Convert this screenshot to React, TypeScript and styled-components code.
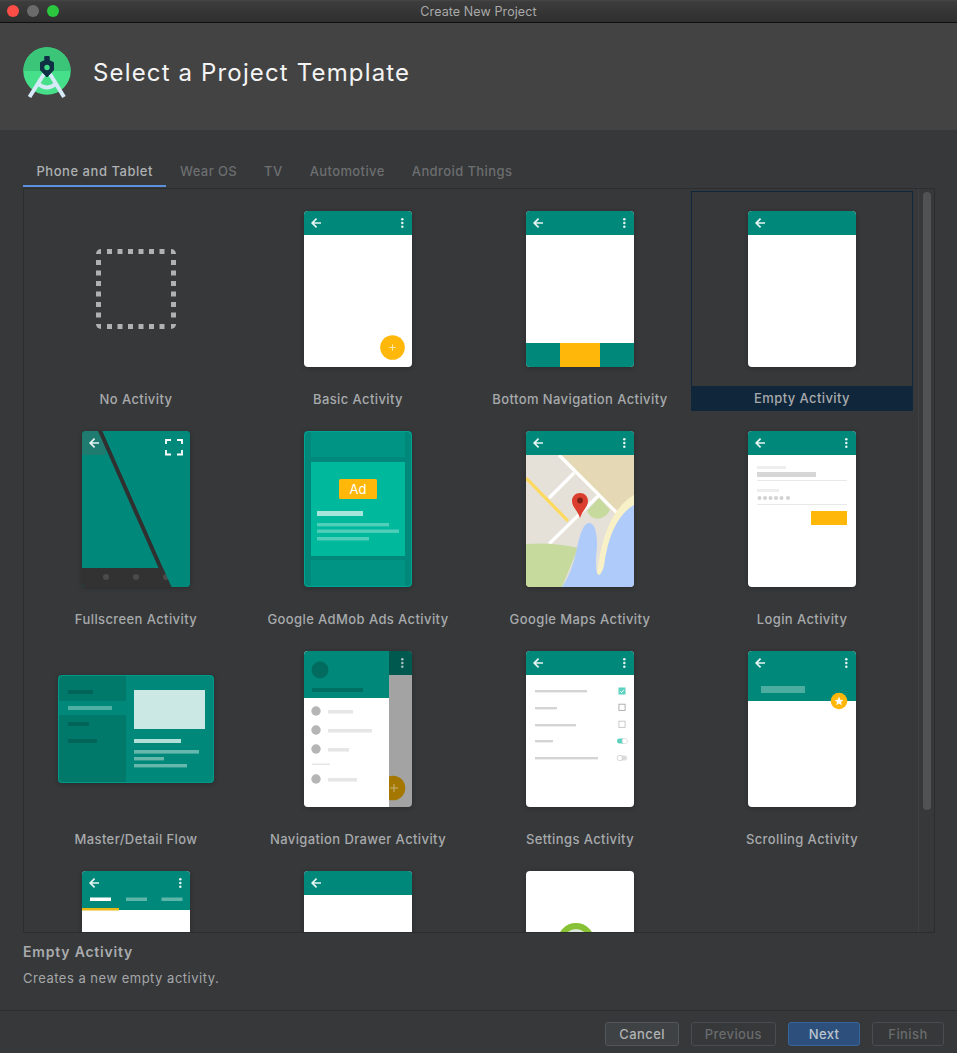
import type { ReactNode } from "react";
import styled, { createGlobalStyle } from "styled-components";

const TEAL = "#00897b";
const AMBER = "#ffb80a";

const GlobalStyle = createGlobalStyle`
  html, body {
    margin: 0;
    padding: 0;
    background: #36383a;
  }

  body {
    font-family: Inter, "Liberation Sans", sans-serif;
    -webkit-font-smoothing: antialiased;
  }
`;

function Arrow() {
  return (
    <path
      d="M17 12 H9 M12.6 7.6 L8.2 12 L12.6 16.4"
      fill="none"
      stroke="#e6f4f2"
      strokeWidth="1.7"
    />
  );
}

function Dots({ color = "#e6f4f2" }: { color?: string }) {
  return (
    <g fill={color}>
      <circle cx="98.3" cy="8.2" r="1.25" />
      <circle cx="98.3" cy="12" r="1.25" />
      <circle cx="98.3" cy="15.8" r="1.25" />
    </g>
  );
}

function Toolbar({ dots = true, height = 24 }: { dots?: boolean; height?: number }) {
  return (
    <>
      <rect width="108" height={height} fill={TEAL} />
      <Arrow />
      {dots && <Dots />}
    </>
  );
}

function Phone({ children, bg = "#fff" }: { children: ReactNode; bg?: string }) {
  return (
    <PhoneSvg viewBox="0 0 108 156" $bg={bg}>
      {children}
    </PhoneSvg>
  );
}

function NoActivity() {
  const steps = [11, 21.5, 32, 42.5, 53, 63.5];
  return (
    <BlankSvg viewBox="0 0 80 80">
      <g fill="#afb1b2">
        {steps.map((s) => (
          <g key={s}>
            <rect x={s} y="0" width="5" height="5" />
            <rect x={s} y="75" width="5" height="5" />
            <rect x="0" y={s} width="5" height="5" />
            <rect x="75" y={s} width="5" height="5" />
          </g>
        ))}
        <path d="M0 5 A5 5 0 0 1 5 0 V5 Z" />
        <path d="M75 0 A5 5 0 0 1 80 5 H75 Z" />
        <path d="M0 75 H5 V80 A5 5 0 0 1 0 75 Z" />
        <path d="M75 75 H80 A5 5 0 0 1 75 80 Z" />
      </g>
    </BlankSvg>
  );
}

function BasicPreview() {
  return (
    <Phone>
      <Toolbar />
      <circle cx="88.5" cy="136.5" r="12.3" fill={AMBER} />
      <path d="M85.3 136.5 H91.7 M88.5 133.3 V139.7" stroke="#ffe9a8" strokeWidth="1" />
    </Phone>
  );
}

function BottomNavPreview() {
  return (
    <Phone>
      <Toolbar />
      <rect y="132" width="108" height="24" fill={TEAL} />
      <rect x="34" y="132" width="40" height="24" fill={AMBER} />
    </Phone>
  );
}

function EmptyPreview() {
  return (
    <Phone>
      <Toolbar dots={false} />
    </Phone>
  );
}

function FullscreenPreview() {
  return (
    <Phone bg={TEAL}>
      <rect width="24" height="24" fill="#1f7a6f" />
      <polygon points="16,0 20.5,0 89.5,156 85,156" fill="#303030" />
      <rect y="137" width="92" height="19" fill="#323232" />
      <g fill="#4b4b4b">
        <circle cx="24" cy="146" r="3" />
        <circle cx="54" cy="146" r="3" />
        <circle cx="84" cy="146" r="3" />
      </g>
      <polygon points="20.5,0 108,0 108,156 89.5,156" fill={TEAL} />
      <Arrow />
      <path
        d="M84 13 V9 H89 M95 9 H100 V13 M84 19 V23.5 H89 M95 23.5 H100 V19"
        fill="none"
        stroke="#fff"
        strokeWidth="1.8"
      />
    </Phone>
  );
}

function AdMobPreview() {
  return (
    <Phone bg={TEAL}>
      <rect x="7" y="0" width="94" height="26" fill="#009484" />
      <rect x="7" y="129" width="94" height="27" fill="#009484" />
      <rect x="7" y="31" width="94" height="94" fill="#00b89c" />
      <rect x="35" y="48" width="38" height="20" rx="1.5" fill={AMBER} />
      <AdText x="54" y="63" textAnchor="middle">
        Ad
      </AdText>
      <rect x="13" y="80" width="46" height="5" fill="#a6e5da" />
      <g fill="#4fcfb9">
        <rect x="13" y="92" width="72" height="3.4" />
        <rect x="13" y="98.5" width="82" height="3.4" />
        <rect x="13" y="106" width="52" height="3.4" />
      </g>
      <rect x="0.5" y="0.5" width="107" height="155" rx="4" fill="none" stroke="#00a392" />
    </Phone>
  );
}

function MapsPreview() {
  return (
    <Phone bg="#e5e1d8">
      <polygon points="32,24 108,24 108,64 90,84" fill="#e5d9b5" />
      <g stroke="#fff" strokeWidth="3.2" fill="none">
        <path d="M33 24 L92 83" />
        <path d="M23 113 L72 65" />
        <path d="M23 67 L48 42" />
      </g>
      <path d="M0 47 L42 90" stroke="#fdd95c" strokeWidth="3.2" />
      <path d="M61 80 L73 67 L84 79 Q78 90 68 87 Q64 86 61 80 Z" fill="#c6da9e" />
      <path d="M0 113 Q28 111 52 117 L36 156 H0 Z" fill="#c6da9e" />
      <path d="M108 64 Q80 80 72 135 L70 148 L80 148 L108 100 Z" fill="#f8f0c6" />
      <path
        d="M108 74 Q84 88 78 135 Q74 148 71 142 Q69 136 71 115 Q71 92 63 92 Q56 92 51 117 Q46 142 36 156 H108 Z"
        fill="#aecbfa"
      />
      <path
        d="M54 62 C49.5 62 46 65.5 46 70 C46 76 52 80 54 87 C56 80 62 76 62 70 C62 65.5 58.5 62 54 62 Z"
        fill="#db3e2e"
      />
      <circle cx="54" cy="69.5" r="2.9" fill="#7d2016" />
      <Toolbar />
    </Phone>
  );
}

function LoginPreview() {
  return (
    <Phone>
      <Toolbar />
      <rect x="9" y="35" width="29" height="3" fill="#eeeeee" />
      <rect x="9" y="41" width="59" height="5" fill="#d6d6d6" />
      <rect x="9" y="49" width="90" height="1" fill="#e8e8e8" />
      <rect x="9" y="58" width="22" height="3" fill="#eeeeee" />
      <g fill="#d2d2d2">
        {[11.5, 17, 22.5, 28, 33.5, 40].map((x) => (
          <circle key={x} cx={x} cy="67" r="2" />
        ))}
      </g>
      <rect x="9" y="73" width="90" height="1" fill="#e8e8e8" />
      <rect x="63" y="80" width="36" height="14" fill={AMBER} />
    </Phone>
  );
}

function MasterDetailPreview() {
  return (
    <WideSvg viewBox="0 0 156 108">
      <rect x="0" width="68" height="108" fill="#00796b" />
      <rect x="0" y="26" width="68" height="14" fill={TEAL} />
      <g fill="#006458">
        <rect x="10" y="15" width="25" height="4" />
        <rect x="10" y="47" width="21" height="4" />
        <rect x="10" y="64" width="29" height="4" />
      </g>
      <rect x="10" y="31" width="44" height="4" fill="#4fb0a3" />
      <rect x="76" y="15" width="71" height="39" fill="#cbe8e5" />
      <rect x="76" y="64" width="47" height="4" fill="#b2dfd8" />
      <g fill="#66b8ac">
        <rect x="76" y="75" width="65" height="3.6" />
        <rect x="76" y="82" width="30" height="3.4" />
        <rect x="76" y="89" width="53" height="3.4" />
      </g>
      <rect x="0.5" y="0.5" width="155" height="107" rx="4" fill="none" stroke="#009a8a" />
    </WideSvg>
  );
}

function NavDrawerPreview() {
  return (
    <Phone bg="#a3a3a3">
      <rect x="85" width="23" height="24" fill="#00594f" />
      <Dots color="#a9c4c0" />
      <circle cx="89" cy="137" r="12.3" fill="#a37700" />
      <path d="M90 133 V141 M86 137 H94" stroke="#c7b27a" strokeWidth="1" />
      <rect width="85" height="156" fill="#fff" />
      <rect width="85" height="47" fill={TEAL} />
      <circle cx="16" cy="19" r="8.5" fill="#006b5e" />
      <rect x="8" y="37" width="51" height="4" fill="#006f63" />
      <g fill="#b5b5b5">
        <circle cx="12" cy="60" r="4.7" />
        <circle cx="12" cy="79" r="4.7" />
        <circle cx="12" cy="98" r="4.7" />
        <circle cx="12" cy="128" r="4.7" />
      </g>
      <g fill="#e6e6e6">
        <rect x="24" y="59" width="25" height="3.6" />
        <rect x="24" y="78" width="44" height="3.6" />
        <rect x="24" y="97" width="21" height="3.6" />
        <rect x="8" y="112.5" width="18" height="1.6" />
        <rect x="24" y="127" width="29" height="3.6" />
      </g>
    </Phone>
  );
}

function SettingsPreview() {
  return (
    <Phone>
      <Toolbar />
      <g fill="#d4d4d4">
        <rect x="9" y="39" width="52" height="2.4" />
        <rect x="9" y="56" width="22" height="2.4" />
        <rect x="9" y="73" width="41" height="2.4" />
        <rect x="9" y="89" width="18" height="2.4" />
        <rect x="9" y="106" width="63" height="2.4" />
      </g>
      <rect x="92.5" y="36.5" width="7" height="7" fill="#5cd1bf" />
      <path d="M94 40.2 L95.5 41.7 L98 38.7" fill="none" stroke="#fff" strokeWidth="0.9" />
      <rect x="92.9" y="53.2" width="6.2" height="6.2" fill="none" stroke="#a8a8a8" strokeWidth="0.9" />
      <rect x="92.9" y="70.2" width="6.2" height="6.2" fill="none" stroke="#c4c4c4" strokeWidth="0.9" />
      <rect x="91" y="87.5" width="9" height="5" rx="2.5" fill="#5cd1bf" />
      <circle cx="98.7" cy="90" r="2.7" fill="#fff" stroke="#cfcfcf" strokeWidth="0.6" />
      <rect x="92" y="104.5" width="9" height="5" rx="2.5" fill="#dcdcdc" />
      <circle cx="93.8" cy="107" r="2.7" fill="#fff" stroke="#bdbdbd" strokeWidth="0.6" />
    </Phone>
  );
}

function ScrollingPreview() {
  return (
    <Phone>
      <Toolbar height={50} />
      <rect x="13" y="35" width="44" height="7" fill="#4dada1" />
      <circle cx="91" cy="50" r="8.3" fill={AMBER} />
      <polygon
        points="91,45.6 92.3,48.8 95.5,49 93,51.1 93.8,54.3 91,52.5 88.2,54.3 89,51.1 86.5,49 89.7,48.8"
        fill="#fff"
      />
    </Phone>
  );
}

function TabbedPreview() {
  return (
    <Phone>
      <Toolbar height={39} />
      <rect x="8" y="26.5" width="21" height="3.5" fill="#fff" />
      <rect x="44" y="26.5" width="21" height="3.5" fill="#5db5a9" />
      <rect x="79.5" y="26.5" width="21" height="3.5" fill="#5db5a9" />
      <rect y="37" width="37" height="2.5" fill="#eab916" />
    </Phone>
  );
}

function NativePreview() {
  return (
    <Phone>
      <circle cx="50" cy="70.5" r="15.5" fill="#dfe6da" stroke="#86c233" strokeWidth="6" />
    </Phone>
  );
}

// the last row is scrolled out of view below its previews, so it needs no names
type Template = { name?: string; preview: ReactNode };

const templates: Template[] = [
  { name: "No Activity", preview: <NoActivity /> },
  { name: "Basic Activity", preview: <BasicPreview /> },
  { name: "Bottom Navigation Activity", preview: <BottomNavPreview /> },
  { name: "Empty Activity", preview: <EmptyPreview /> },
  { name: "Fullscreen Activity", preview: <FullscreenPreview /> },
  { name: "Google AdMob Ads Activity", preview: <AdMobPreview /> },
  { name: "Google Maps Activity", preview: <MapsPreview /> },
  { name: "Login Activity", preview: <LoginPreview /> },
  { name: "Master/Detail Flow", preview: <MasterDetailPreview /> },
  { name: "Navigation Drawer Activity", preview: <NavDrawerPreview /> },
  { name: "Settings Activity", preview: <SettingsPreview /> },
  { name: "Scrolling Activity", preview: <ScrollingPreview /> },
  { preview: <TabbedPreview /> },
  { preview: <EmptyPreview /> },
  { preview: <NativePreview /> },
];

const tabs = ["Phone and Tablet", "Wear OS", "TV", "Automotive", "Android Things"];

function StudioLogo() {
  return (
    <LogoSvg viewBox="0 0 48 52">
      <circle cx="24" cy="24" r="23.7" fill="#47e08a" />
      <path d="M0.3 24 A23.7 23.7 0 0 1 47.7 24 Z" fill="#3ac579" />
      <g fill="none" stroke="#d6e9f7" strokeWidth="4">
        <path d="M21 27 L6.5 50" />
        <path d="M27 27 L41 50" />
        <path d="M14.5 36 Q24 45 33.5 36" />
      </g>
      <path
        d="M21.8 9.5 H26.2 V13.5 L30.5 15.5 V23 L24 30 L17.5 23 V15.5 L21.8 13.5 Z"
        fill="#0f3044"
        stroke="#0f3044"
        strokeLinejoin="round"
      />
      <circle cx="24" cy="20.5" r="2.7" fill="#3ddc84" />
    </LogoSvg>
  );
}

export default function App() {
  return (
    <Window>
      <GlobalStyle />
      <TitleBar>
        <Lights>
          <Light $color="#fc4d47" />
          <Light $color="#6b6b6b" />
          <Light $color="#2ac73f" />
        </Lights>
        <WindowTitle>Create New Project</WindowTitle>
      </TitleBar>
      <Header>
        <StudioLogo />
        <HeaderTitle>Select a Project Template</HeaderTitle>
      </Header>
      <Body>
        <TabBar>
          {tabs.map((tab, i) => (
            <Tab key={tab} $active={i === 0}>
              {tab}
            </Tab>
          ))}
        </TabBar>
        <GridPanel>
          <GridClip>
            <Grid>
              {templates.map((t, i) => (
                <Cell key={i} $selected={t.name === "Empty Activity"}>
                  <PreviewSlot>{t.preview}</PreviewSlot>
                  <CellLabel $selected={t.name === "Empty Activity"}>{t.name}</CellLabel>
                </Cell>
              ))}
            </Grid>
          </GridClip>
          <ScrollTrack>
            <ScrollThumb />
          </ScrollTrack>
        </GridPanel>
        <Description>
          <DescriptionTitle>Empty Activity</DescriptionTitle>
          <DescriptionText>Creates a new empty activity.</DescriptionText>
        </Description>
      </Body>
      <Footer>
        <Button $kind="normal">Cancel</Button>
        <Button $kind="disabled">Previous</Button>
        <Button $kind="primary">Next</Button>
        <Button $kind="disabled">Finish</Button>
      </Footer>
    </Window>
  );
}

const Window = styled.div`
  display: flex;
  flex-direction: column;
  width: 957px;
  height: 1053px;
  overflow: hidden;
  background: #36383a;
`;

const TitleBar = styled.div`
  display: flex;
  align-items: center;
  justify-content: center;
  position: relative;
  box-sizing: border-box;
  height: 23px;
  flex: none;
  background: linear-gradient(180deg, #474747 0%, #3c3c3c 8%, #2f2f2f 100%);
  border-bottom: 1px solid #0f0f0f;
`;

const Lights = styled.div`
  display: flex;
  gap: 8px;
  position: absolute;
  top: 5px;
  left: 7px;
`;

const Light = styled.span<{ $color: string }>`
  width: 12px;
  height: 12px;
  border-radius: 50%;
  background: ${(p) => p.$color};
`;

const WindowTitle = styled.span`
  color: #a9a9a9;
  font-size: 12.5px;
  letter-spacing: 0.1px;
`;

const Header = styled.header`
  display: flex;
  align-items: center;
  gap: 22px;
  box-sizing: border-box;
  height: 107px;
  flex: none;
  padding: 0 0 8px 23px;
  background: #434343;
`;

const LogoSvg = styled.svg`
  width: 48px;
  height: 52px;
  flex: none;
`;

const HeaderTitle = styled.h1`
  margin: 0;
  color: #f4f4f4;
  font-size: 24px;
  font-weight: 400;
  letter-spacing: 1.15px;
`;

const Body = styled.main`
  display: flex;
  flex-direction: column;
  flex: 1;
  min-height: 0;
  padding: 27px 22px 0 23px;
`;

const TabBar = styled.nav`
  display: flex;
  height: 31px;
  flex: none;
`;

const Tab = styled.div<{ $active: boolean }>`
  display: flex;
  align-items: center;
  box-sizing: border-box;
  height: 30px;
  padding: 0 13.5px;
  border-bottom: 2px solid ${(p) => (p.$active ? "#5c8fdc" : "transparent")};
  color: ${(p) => (p.$active ? "#aeb0b2" : "#6c6e70")};
  font-size: 13px;
  font-weight: 500;
  letter-spacing: ${(p) => (p.$active ? "0.53px" : "0.4px")};
`;

const GridPanel = styled.section`
  display: flex;
  box-sizing: border-box;
  height: 745px;
  flex: none;
  border: 1px solid #2b2d2f;
`;

const GridClip = styled.div`
  flex: 1;
  min-width: 0;
  overflow: hidden;
  padding: 2px 0 0 1px;
`;

const Grid = styled.div`
  display: grid;
  grid-template-columns: repeat(4, 222px);
  grid-auto-rows: 220px;
`;

const Cell = styled.div<{ $selected: boolean }>`
  display: flex;
  flex-direction: column;
  box-shadow: ${(p) => (p.$selected ? "inset 0 0 0 1px #10263a" : "none")};
`;

const PreviewSlot = styled.div`
  display: flex;
  align-items: center;
  justify-content: center;
  flex: 1;
  min-height: 0;
`;

const PhoneSvg = styled.svg<{ $bg: string }>`
  display: block;
  width: 108px;
  height: 156px;
  border-radius: 4px;
  background: ${(p) => p.$bg};
  box-shadow: 0 1px 5px rgb(0 0 0 / 25%);
`;

const WideSvg = styled.svg`
  display: block;
  width: 156px;
  height: 108px;
  border-radius: 4px;
  background: #00897b;
  box-shadow: 0 1px 5px rgb(0 0 0 / 25%);
`;

const BlankSvg = styled.svg`
  display: block;
  width: 80px;
  height: 80px;
`;

const AdText = styled.text`
  fill: #fff;
  font-family: Inter, sans-serif;
  font-size: 13px;
`;

const CellLabel = styled.div<{ $selected: boolean }>`
  box-sizing: border-box;
  height: ${(p) => (p.$selected ? "25px" : "24px")};
  flex: none;
  margin-top: ${(p) => (p.$selected ? "-1px" : "0")};
  background: ${(p) => (p.$selected ? "#10263a" : "transparent")};
  color: #a8aaac;
  font-size: 13px;
  font-weight: 500;
  letter-spacing: 0.4px;
  line-height: 24px;
  text-align: center;
  white-space: nowrap;
`;

const ScrollTrack = styled.div`
  box-sizing: border-box;
  width: 16px;
  flex: none;
  padding: 3px 3px 0 4px;
  border-left: 1px solid #3f4143;
`;

const ScrollThumb = styled.div`
  width: 8px;
  height: 618px;
  border-radius: 4px;
  background: #505254;
`;

const Description = styled.div`
  display: flex;
  flex-direction: column;
  gap: 10px;
  padding-top: 10px;
`;

const DescriptionTitle = styled.div`
  color: #a9abad;
  font-size: 14px;
  font-weight: 600;
  letter-spacing: 0.8px;
  line-height: 17px;
`;

const DescriptionText = styled.div`
  color: #a5a7a9;
  font-size: 13px;
  letter-spacing: 0.5px;
  line-height: 16px;
`;

const Footer = styled.footer`
  display: flex;
  justify-content: flex-end;
  gap: 12px;
  box-sizing: border-box;
  height: 43px;
  flex: none;
  padding: 11px 13px 0 0;
  border-top: 1px solid #2b2d2f;
`;

const buttonColors = {
  normal: { bg: "#3f4244", border: "#54575a", text: "#b0b2b4" },
  disabled: { bg: "transparent", border: "#4a4c4f", text: "#696b6d" },
  primary: { bg: "#2c4f7c", border: "#37659c", text: "#bcc4cd" },
};

const Button = styled.button<{ $kind: keyof typeof buttonColors }>`
  box-sizing: border-box;
  height: 24px;
  min-width: 72px;
  padding: 0 13px;
  border: 1px solid ${(p) => buttonColors[p.$kind].border};
  border-radius: 3px;
  background: ${(p) => buttonColors[p.$kind].bg};
  color: ${(p) => buttonColors[p.$kind].text};
  font-family: inherit;
  font-size: 13px;
  font-weight: 500;
  letter-spacing: 0.4px;
`;
